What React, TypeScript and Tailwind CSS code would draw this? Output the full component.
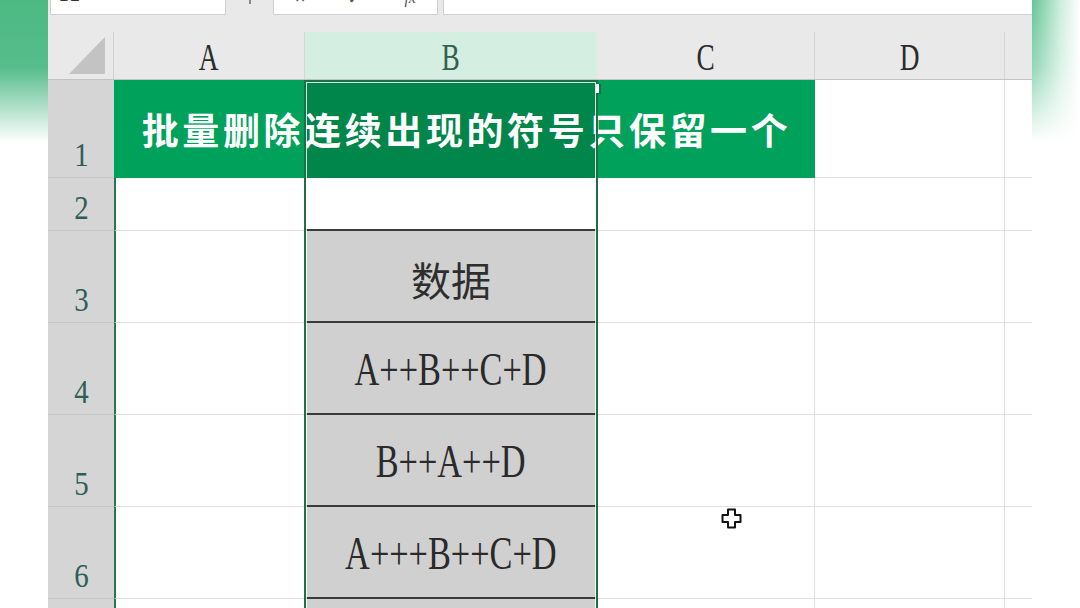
import React from "react";

const rows = [
  { n: "1", h: 98 },
  { n: "2", h: 53 },
  { n: "3", h: 92, b: "数据", cjk: true },
  { n: "4", h: 92, b: "A++B++C+D" },
  { n: "5", h: 92, b: "B++A++D" },
  { n: "6", h: 92, b: "A+++B++C+D" },
  { n: "7", h: 92 },
];

function RowHead({ n, h }: { n: string; h: number }) {
  return (
    <div
      className="w-[66px] shrink-0 bg-[#d5d5d5] border-b border-[#c6c6c6] flex items-end justify-center"
      style={{ height: h }}
    >
      <span className="[font-family:'Liberation_Serif',serif] text-[34px] leading-none text-[#2e5d57] pb-[5px] inline-block scale-x-[0.85]">
        {n}
      </span>
    </div>
  );
}

export default function App() {
  return (
    <div className="relative w-[1080px] h-[608px] overflow-hidden bg-white flex">
      {/* left gradient strip */}
      <div className="w-[48px] shrink-0 flex flex-col">
        <div className="h-[150px] shrink-0 bg-[linear-gradient(to_bottom,#4cb983_0%,#56bd8b_45%,#ffffff_95%)]" />
        <div className="flex-1 bg-white" />
      </div>

      {/* sheet */}
      <div className="w-[984px] shrink-0 flex flex-col bg-[#e9e9e9] overflow-hidden">
        {/* formula bar */}
        <div className="h-[16px] shrink-0 flex items-start overflow-hidden">
          <div className="ml-[2px] w-[176px] h-[15px] bg-white border border-t-0 border-[#cfcfcf] overflow-hidden">
            <div className="-mt-[13px] ml-[8px] text-[17px] leading-[18px] text-[#333] [font-family:'Liberation_Sans',sans-serif]">
              B2
            </div>
          </div>
          <div className="w-[47px] h-[15px] flex justify-center overflow-hidden">
            <div className="-mt-[8px] w-[2px] h-[12px] bg-[#888]" />
          </div>
          <div className="w-[165px] h-[15px] bg-white border border-t-0 border-[#cfcfcf] flex items-start justify-around overflow-hidden text-[#555]">
            <span className="-mt-[12px] text-[18px] leading-[18px]">×</span>
            <span className="-mt-[12px] text-[18px] leading-[18px]">✓</span>
            <span className="-mt-[11px] text-[16px] leading-[18px] italic [font-family:'Liberation_Serif',serif]">fx</span>
          </div>
          <div className="ml-[5px] flex-1 h-[15px] bg-white border-b border-l border-[#cfcfcf]" />
        </div>
        <div className="h-[16px] shrink-0" />

        {/* column header */}
        <div className="h-[48px] shrink-0 flex border-b border-[#c2c2c2] [font-family:'Liberation_Serif',serif]">
          <div className="w-[66px] shrink-0 border-r border-[#d0d0d0] flex items-end justify-end pr-[8px] pb-[5px]">
            <svg width="36" height="37" viewBox="0 0 36 37">
              <polygon points="36,0 36,37 0,37" fill="#c3c3c3" />
            </svg>
          </div>
          <div className="w-[191px] shrink-0 border-r border-[#d6d6d6] flex items-center justify-center text-[38px] text-[#2b2b2b] pt-[4px]">
            <span className="inline-block scale-x-[0.72]">A</span>
          </div>
          <div className="w-[292px] shrink-0 bg-[#d4efe2] flex items-center justify-center text-[38px] text-[#33604f] pt-[4px]">
            <span className="inline-block scale-x-[0.72]">B</span>
          </div>
          <div className="w-[218px] shrink-0 border-r border-[#d6d6d6] flex items-center justify-center text-[38px] text-[#2b2b2b] pt-[4px]">
            <span className="inline-block scale-x-[0.72]">C</span>
          </div>
          <div className="w-[190px] shrink-0 border-r border-[#d6d6d6] flex items-center justify-center text-[38px] text-[#2b2b2b] pt-[4px]">
            <span className="inline-block scale-x-[0.72]">D</span>
          </div>
          <div className="flex-1" />
        </div>

        {/* body */}
        <div className="relative flex-1 min-h-0 overflow-hidden flex flex-col bg-white">
          {rows.map((r, i) => {
            if (i === 0) {
              return (
                <div key={r.n} className="flex shrink-0" style={{ height: r.h }}>
                  <RowHead n={r.n} h={r.h} />
                  <div className="relative w-[701px] shrink-0 bg-[#00a15a] flex items-center justify-center">
                    <div className="absolute left-[191px] top-0 bottom-0 w-[292px] bg-[#00854a]" />
                    <span className="relative pl-[4px] text-white font-bold text-[37px] tracking-[3.6px] leading-none [font-family:'Noto_Sans_CJK_SC',sans-serif]">
                      批量删除连续出现的符号只保留一个
                    </span>
                  </div>
                  <div className="w-[190px] shrink-0 border-b border-r border-[#e0e0e0]" />
                  <div className="flex-1 border-b border-[#e0e0e0]" />
                </div>
              );
            }
            const gray = i >= 2;
            return (
              <div key={r.n} className="flex shrink-0" style={{ height: r.h }}>
                <RowHead n={r.n} h={r.h} />
                <div className="w-[191px] shrink-0 border-l-2 border-l-[#2e7353] border-b border-b-[#e0e0e0]" />
                <div
                  className={
                    "w-[292px] shrink-0 border-b-2 border-b-[#3a3a3a] flex items-center justify-center " +
                    (gray ? "bg-[#d0d0d0]" : "bg-white")
                  }
                >
                  {r.b && r.cjk && (
                    <span className="pt-[6px] text-[40px] leading-none text-[#2e2e2e] [font-family:'Noto_Sans_CJK_SC',sans-serif]">
                      {r.b}
                    </span>
                  )}
                  {r.b && !r.cjk && (
                    <span className="inline-block scale-x-[0.73] text-[47px] leading-none text-[#2a2a2a] [font-family:'Liberation_Serif',serif] pt-[2px]">
                      {r.b}
                    </span>
                  )}
                </div>
                <div className="w-[218px] shrink-0 border-b border-r border-[#e0e0e0]" />
                <div className="w-[190px] shrink-0 border-b border-r border-[#e0e0e0]" />
                <div className="flex-1 border-b border-[#e0e0e0]" />
              </div>
            );
          })}

          {/* selection rectangle over column B */}
          <div className="absolute left-[256px] top-0 w-[294px] h-[600px] border-2 border-[#1f6e48] pointer-events-none">
            <div className="absolute inset-0 border border-white/80" />
            <div className="absolute -right-[5px] top-[2px] w-[5px] h-[10px] bg-white border-r-2 border-b border-[#1f6e48]" />
          </div>
        </div>
      </div>

      {/* right gradient strip */}
      <div className="w-[48px] shrink-0 flex flex-col">
        <div className="h-[150px] shrink-0 bg-[linear-gradient(to_bottom,rgba(255,255,255,0)_0%,rgba(255,255,255,0.3)_45%,#ffffff_95%),linear-gradient(to_right,#63c597_0%,#cdeedd_60%,#ffffff_100%)]" />
        <div className="flex-1 bg-white" />
      </div>

      {/* cursor */}
      <svg
        className="absolute left-[721px] top-[508px]"
        width="21"
        height="21"
        viewBox="0 0 21 21"
      >
        <path
          d="M7 1.5 H14 V7 H19.5 V14 H14 V19.5 H7 V14 H1.5 V7 H7 Z"
          fill="#ffffff"
          stroke="#111"
          strokeWidth="2"
          strokeLinejoin="round"
        />
      </svg>
    </div>
  );
}
